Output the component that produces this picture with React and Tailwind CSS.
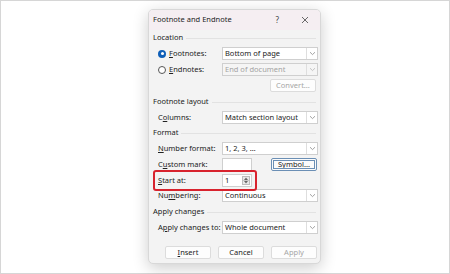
import React from "react";

const font = { fontFamily: '"Noto Sans", "Open Sans", sans-serif' };

function Chevron({ dim }) {
  return (
    <svg width="7" height="5" viewBox="0 0 7 5" className="block">
      <path d="M1 1.2 L3.5 3.6 L6 1.2" fill="none" stroke={dim ? "#b5b5b5" : "#8a8a8a"} strokeWidth="0.8" />
    </svg>
  );
}

function Combo({ value, disabled }) {
  return (
    <div
      className={`flex h-[13px] w-[96px] items-stretch border border-[#cfcfcf] ${disabled ? "bg-[#f5f5f5] text-[#a3a3a3]" : "bg-white text-[#222]"}`}
    >
      <div className="flex flex-1 items-center pl-[2px] leading-none">{value}</div>
      <div className="flex w-[11px] items-center justify-center border-l border-[#dedede]">
        <Chevron dim={disabled} />
      </div>
    </div>
  );
}

function Btn({ children, disabled, focused, className = "" }) {
  return (
    <div
      className={`flex h-[13px] w-[46px] items-center justify-center rounded-[2px] border leading-none ${
        focused
          ? "border-[#6b8fb5] bg-[#fbfbfb] outline outline-1 outline-offset-[-3px] outline-[#6b8fb5]"
          : "border-[#dcdcdc] bg-[#fdfdfd]"
      } ${disabled ? "text-[#a5a5a5]" : "text-[#222]"} ${className}`}
    >
      {children}
    </div>
  );
}

function Heading({ children, className = "" }) {
  return (
    <div className={`flex h-[12px] items-center gap-[3px] pr-[4px] leading-none text-[#222] ${className}`}>
      <span>{children}</span>
      <div className="h-px flex-1 bg-[#e2e2e2]" />
    </div>
  );
}

function Row({ label, children, className = "" }) {
  return (
    <div className={`flex h-[13px] items-center pl-[5px] ${className}`}>
      <div className="w-[64px] leading-none text-[#222]">{label}</div>
      {children}
    </div>
  );
}

export default function App() {
  return (
    <div className="flex h-[274px] w-[450px] items-start border border-[#d6d6d6] bg-white pl-[147px]" style={font}>
      <div className="relative mt-[8px] flex h-[255px] w-[173px] flex-col overflow-hidden rounded-[5px] border border-[#d8d8d8] bg-[#f3f3f3] text-[7.5px] shadow-[0_4px_16px_rgba(0,0,0,0.2)]">
        <div className="flex h-[20px] items-center bg-[#f5eef2] pl-[4px] text-[#222]">
          <span className="flex-1 leading-none">Footnote and Endnote</span>
          <span className="mr-[22px] text-[8px] leading-none text-[#444]">?</span>
          <svg width="8" height="8" viewBox="0 0 8 8" className="mr-[11px]">
            <path d="M1 1 L7 7 M7 1 L1 7" stroke="#444" strokeWidth="0.8" />
          </svg>
        </div>

        <div className="flex flex-col pl-[4px]">
          <Heading className="mt-[2px]">Location</Heading>

          <div className="mt-[3px] flex h-[13px] items-center pl-[5px]">
            <div className="flex h-[8px] w-[8px] items-center justify-center rounded-full bg-[#0f5fb8]">
              <div className="h-[3px] w-[3px] rounded-full bg-white" />
            </div>
            <div className="ml-[3px] w-[53px] leading-none text-[#222]">
              <span className="underline">F</span>ootnotes:
            </div>
            <Combo value="Bottom of page" />
          </div>

          <div className="mt-[3px] flex h-[13px] items-center pl-[5px]">
            <div className="h-[8px] w-[8px] rounded-full border border-[#555] bg-white" />
            <div className="ml-[3px] w-[53px] leading-none text-[#222]">
              <span className="underline">E</span>ndnotes:
            </div>
            <Combo value="End of document" disabled />
          </div>

          <div className="mt-[3px] flex h-[12px] justify-end pr-[4px]">
            <Btn disabled className="h-[12px] w-[46px]">Convert...</Btn>
          </div>

          <Heading className="mt-[5px]">Footnote layout</Heading>

          <Row label={<>C<span className="underline">o</span>lumns:</>} className="mt-[3px]">
            <Combo value="Match section layout" />
          </Row>

          <Heading className="mt-[3px]">Format</Heading>

          <Row label={<><span className="underline">N</span>umber format:</>} className="mt-[3px]">
            <Combo value="1, 2, 3, …" />
          </Row>

          <Row label={<>C<span className="underline">u</span>stom mark:</>} className="mt-[3px]">
            <div className="h-[13px] w-[30px] border border-[#cfcfcf] bg-white" />
            <Btn focused className="ml-[19px]">
              <span><span className="underline">S</span>ymbol...</span>
            </Btn>
          </Row>

          <Row label={<><span className="underline">S</span>tart at:</>} className="mt-[3px]">
            <div className="flex h-[13px] w-[30px] items-stretch border border-[#cfcfcf] bg-white">
              <div className="flex flex-1 items-center pl-[2px] leading-none text-[#222]">1</div>
              <div className="my-[1px] mr-[1px] flex w-[8px] flex-col border border-[#bdbdbd] bg-[#e9e9e9]">
                <div className="flex flex-1 items-center justify-center border-b border-[#c8c8c8]">
                  <svg width="4" height="3" viewBox="0 0 4 3"><path d="M0 3 L2 0.5 L4 3 Z" fill="#666" /></svg>
                </div>
                <div className="flex flex-1 items-center justify-center">
                  <svg width="4" height="3" viewBox="0 0 4 3"><path d="M0 0 L2 2.5 L4 0 Z" fill="#666" /></svg>
                </div>
              </div>
            </div>
          </Row>

          <Row label={<>Nu<span className="underline">m</span>bering:</>} className="mt-[2px]">
            <Combo value="Continuous" />
          </Row>

          <Heading className="mt-[4px]">Apply changes</Heading>

          <Row label={<>A<span className="underline">p</span>ply changes to:</>} className="mt-[3px]">
            <Combo value="Whole document" />
          </Row>

          <div className="mt-[12px] flex gap-[7px] pl-[12px]">
            <Btn><span><span className="underline">I</span>nsert</span></Btn>
            <Btn>Cancel</Btn>
            <Btn disabled>Apply</Btn>
          </div>
        </div>

        <div className="pointer-events-none absolute left-[4px] top-[160px] h-[21px] w-[104px] rounded-[3px] border-2 border-[#d8232e]" />
      </div>
    </div>
  );
}
